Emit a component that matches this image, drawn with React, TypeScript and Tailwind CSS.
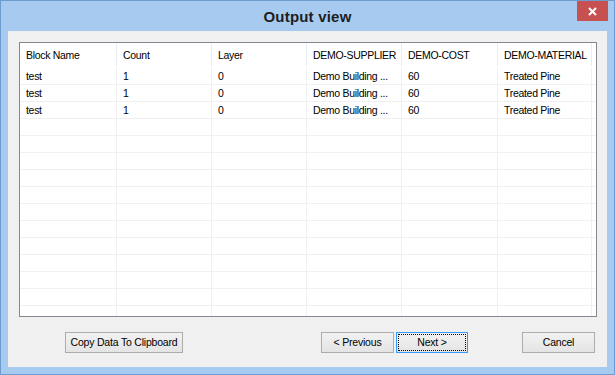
import React from "react";

const columns = [
  { name: "Block Name", w: "w-[97px]" },
  { name: "Count", w: "w-[95px]" },
  { name: "Layer", w: "w-[95px]" },
  { name: "DEMO-SUPPLIER", w: "w-[95px]" },
  { name: "DEMO-COST", w: "w-[96px]" },
  { name: "DEMO-MATERIAL", w: "w-[94px]" },
];

const rows = [
  ["test", "1", "0", "Demo Building ...", "60", "Treated Pine"],
  ["test", "1", "0", "Demo Building ...", "60", "Treated Pine"],
  ["test", "1", "0", "Demo Building ...", "60", "Treated Pine"],
];

const emptyRows = Array.from({ length: 12 }, () => ["", "", "", "", "", ""]);

const btn =
  "h-[21px] border border-[#adadad] bg-gradient-to-b from-[#f2f2f2] to-[#e4e4e4] text-[10.5px] tracking-[-0.2px] text-black flex items-center justify-center whitespace-nowrap";

const App: React.FC = () => {
  return (
    <div
      className="relative w-[615px] h-[375px] flex flex-col border border-[#6f9ccf] bg-[#a7cbf0] overflow-hidden"
      style={{ fontFamily: '"Liberation Sans", Arial, sans-serif' }}
    >
      {/* Title bar */}
      <div className="h-[30px] flex items-center justify-center shrink-0">
        <span className="text-[15px] font-bold text-[#1e1e1e] tracking-[0.2px] mt-[2px]">
          Output view
        </span>
      </div>
      <div className="absolute top-0 right-[6px] w-[31px] h-[20px] bg-[#c75050] flex items-center justify-center">
        <svg width="9" height="9" viewBox="0 0 9 9">
          <path d="M1 1 L8 8 M8 1 L1 8" stroke="white" strokeWidth="2" />
        </svg>
      </div>

      {/* Client area */}
      <div className="mx-[7px] mb-[7px] flex-1 bg-[#f0f0f0] flex flex-col pt-[11px]">
        <div className="ml-[11px] mr-[10px] h-[275px] border border-[#828790] bg-white overflow-hidden">
          {/* Header */}
          <div className="flex h-[25px]">
            {columns.map((c) => (
              <div
                key={c.name}
                className={`${c.w} h-[23px] border-r border-[#e4edf8] flex items-center pl-[6px] pt-[3px] text-[10.5px] tracking-[-0.3px] text-black whitespace-nowrap`}
              >
                {c.name}
              </div>
            ))}
          </div>
          {/* Body */}
          {[...rows, ...emptyRows].map((r, i) => (
            <div key={i} className="flex h-[17px] border-b border-[#f0f0f0]">
              {r.map((v, j) => (
                <div
                  key={j}
                  className={`${columns[j].w} border-r border-[#f0f0f0] flex items-center pl-[6px] pt-[2px] text-[10.5px] tracking-[-0.3px] text-black whitespace-nowrap overflow-hidden`}
                >
                  {v}
                </div>
              ))}
            </div>
          ))}
        </div>

        {/* Buttons */}
        <div className="flex mt-[15px]">
          <button className={`${btn} ml-[57px] w-[118px]`}>Copy Data To Clipboard</button>
          <button className={`${btn} ml-[138px] w-[73px]`}>&lt; Previous</button>
          <button className="ml-[2px] w-[72px] h-[21px] border border-[#3399ff] bg-gradient-to-b from-[#f2f2f2] to-[#e4e4e4] p-[1px]">
            <span className="w-full h-full border border-dotted border-black flex items-center justify-center text-[10.5px] tracking-[-0.2px] text-black">
              Next &gt;
            </span>
          </button>
          <button className={`${btn} ml-[54px] w-[73px]`}>Cancel</button>
        </div>
      </div>
    </div>
  );
};

export default App;
